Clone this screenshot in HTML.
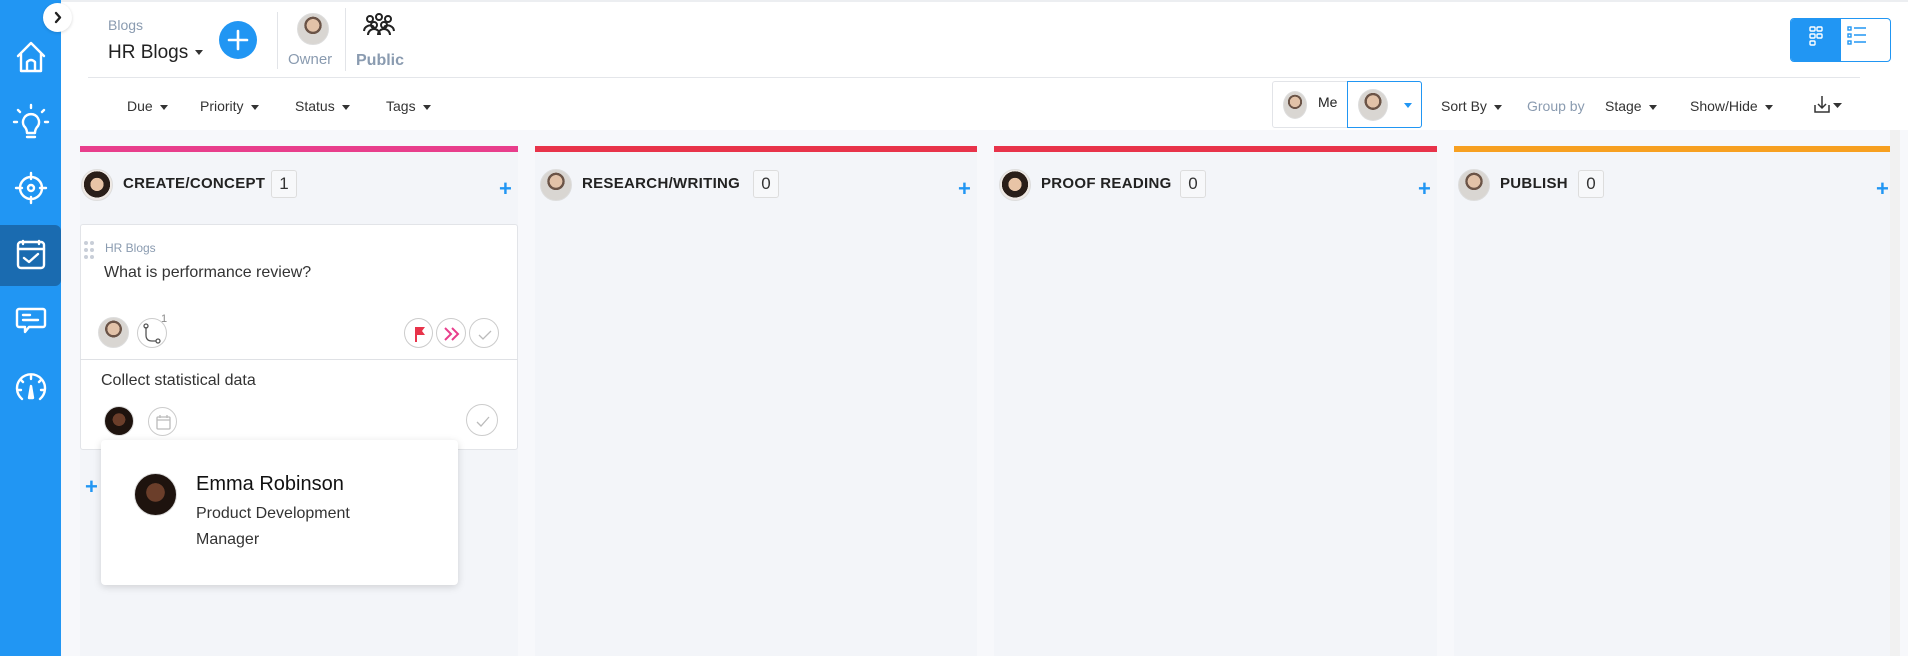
<!DOCTYPE html>
<html><head><meta charset="utf-8"><style>
*{box-sizing:border-box;margin:0;padding:0}
body{width:1908px;height:656px;overflow:hidden;background:#f7f8fb;font-family:"Liberation Sans",sans-serif;color:#222;position:relative}
.abs{position:absolute}
.side{left:0;top:0;width:61px;height:656px;background:#2196f3}
.hdr{left:61px;top:0;width:1847px;height:130px;background:#fff;border-top:2px solid #eceef1}
.av{position:absolute;border-radius:50%;background:radial-gradient(circle at 50% 38%,#e2c2a8 0 26%,#6b5447 27% 36%,#d9d6d2 37% 100%);border:1px solid #ddd}
.avf{background:radial-gradient(circle at 50% 45%,#6b3e2a 0 30%,#1e130e 31% 100%)}
.ava{background:radial-gradient(circle at 50% 48%,#e8c4a6 0 30%,#2a1e18 31% 60%,#efe9e4 61%)}
.dd{font-size:14px;color:#333}
.dd:after{content:"";display:inline-block;margin-left:7px;vertical-align:middle;border-left:4.5px solid transparent;border-right:4.5px solid transparent;border-top:5px solid #333}
.col{top:146px;height:510px;background:#f3f5f9}
.bar{left:0;top:0;right:0;height:6px}
.ct{font-size:15px;font-weight:bold;letter-spacing:.3px;color:#222}
.cnt{width:26px;height:28px;border:1px solid #ddd;border-radius:3px;background:#f7f8fa;text-align:center;line-height:26px;font-size:17px;color:#333}
.plus{color:#2196f3;font-size:22px;font-weight:bold}
.ic{position:absolute;border-radius:50%;border:1px solid #ccc;background:#fff}
</style></head><body>
<div class="abs side">
 <svg class="abs" style="left:0;top:0" width="61" height="420" fill="none" stroke="#fff" stroke-width="2.4" stroke-linecap="round" stroke-linejoin="round">
  <path d="M18 56 L31 43 L44 56 M21 53 V71 H41 V53 M27 71 V62 Q31 58 35 62 V71"/>
  <path d="M24 126 a8 8 0 1 1 14 0 q-3 3 -3 7 h-8 q0 -4 -3 -7z M27 137 h8 M31 108 v-3 M20 112 l-2 -2 M42 112 l2 -2 M17 122 h-3 M45 122 h3"/>
  <circle cx="31" cy="188" r="11"/><circle cx="31" cy="188" r="3"/><path d="M31 173 v6 M31 197 v6 M16 188 h6 M40 188 h6"/>
 </svg>
 <div class="abs" style="left:0;top:225;"></div>
 <div class="abs" style="left:0;top:225px;width:61px;height:61px;background:#1a6bb0;border-radius:0 6px 6px 0"></div>
 <svg class="abs" style="left:0;top:0" width="61" height="420" fill="none" stroke="#fff" stroke-width="2.4" stroke-linecap="round" stroke-linejoin="round">
  <rect x="18" y="242" width="26" height="26" rx="3"/><path d="M18 249 h26 M23 241 v3 M39 241 v3 M24 258 l5 4 l9 -8"/>
  <path d="M19 309 h24 a2 2 0 0 1 2 2 v14 a2 2 0 0 1 -2 2 h-14 l-4 5 v-5 h-6 a2 2 0 0 1 -2 -2 v-14 a2 2 0 0 1 2 -2z M23 315 h7 M23 320 h15"/>
  <path d="M22 399 a14 14 0 1 1 18 0"/><path d="M31 376 v3 M21 380 l2 2 M41 380 l-2 2 M18 390 h3 M44 390 h-3"/><path d="M29 398 l2 -12 l2 12 z" fill="#fff"/>
 </svg>
</div>
<div class="abs" style="left:43px;top:3px;width:29px;height:29px;border-radius:50%;background:#fff;box-shadow:0 1px 3px rgba(0,0,0,.15);z-index:3">
 <svg width="29" height="29" fill="none" stroke="#222" stroke-width="2.4" stroke-linecap="round" stroke-linejoin="round"><path d="M13 10 l4 4.5 l-4 4.5"/></svg></div>
<div class="abs hdr"></div>
<div class="abs" style="left:108px;top:17px;font-size:14px;color:#8a9bb0">Blogs</div>
<div class="abs dd" style="left:108px;top:42px;font-size:19px;color:#222">HR Blogs</div>
<div class="abs" style="left:219px;top:21px;width:38px;height:38px;border-radius:50%;background:#2196f3">
 <svg width="38" height="38" stroke="#fff" stroke-width="2.6" stroke-linecap="round"><path d="M19 10 v18 M10 19 h18"/></svg></div>
<div class="abs" style="left:277px;top:12px;width:1px;height:57px;background:#e2e4e8"></div>
<div class="av" style="left:297px;top:13px;width:32px;height:32px"></div>
<div class="abs" style="left:288px;top:51px;font-size:15px;color:#8a9bb0">Owner</div>
<div class="abs" style="left:345px;top:8px;width:1px;height:63px;background:#e2e4e8"></div>
<svg class="abs" style="left:361px;top:13px" width="36" height="24" fill="none" stroke="#222" stroke-width="2"><circle cx="9" cy="6" r="3"/><circle cx="18" cy="4" r="3"/><circle cx="27" cy="6" r="3"/><circle cx="13" cy="12" r="3"/><circle cx="23" cy="12" r="3"/><path d="M3 18 a6 6 0 0 1 10 -4 M33 18 a6 6 0 0 0 -10 -4 M7 22 a6 6 0 0 1 12 0 M17 22 a6 6 0 0 1 12 0"/></svg>
<div class="abs" style="left:356px;top:52px;font-size:16px;font-weight:bold;color:#8a9bb0">Public</div>
<div class="abs" style="left:88px;top:77px;width:1772px;height:1px;background:#e4e6ea"></div>
<div class="abs dd" style="left:127px;top:98px">Due</div>
<div class="abs dd" style="left:200px;top:98px">Priority</div>
<div class="abs dd" style="left:295px;top:98px">Status</div>
<div class="abs dd" style="left:386px;top:98px">Tags</div>
<div class="abs" style="left:1272px;top:81px;width:150px;height:47px;border:1px solid #e2e4e8;border-radius:3px;background:#fff"></div>
<div class="av" style="left:1283px;top:91px;width:24px;height:28px"></div>
<div class="abs" style="left:1318px;top:94px;font-size:14px">Me</div>
<div class="abs" style="left:1347px;top:81px;width:75px;height:47px;border:1px solid #2196f3;border-radius:0 3px 3px 0"></div>
<div class="av" style="left:1358px;top:89px;width:30px;height:32px"></div>
<div class="abs" style="left:1404px;top:103px;border-left:4.5px solid transparent;border-right:4.5px solid transparent;border-top:5px solid #2196f3"></div>
<div class="abs dd" style="left:1441px;top:98px">Sort By</div>
<div class="abs" style="left:1527px;top:98px;font-size:14px;color:#8a9bb0">Group by</div>
<div class="abs dd" style="left:1605px;top:98px">Stage</div>
<div class="abs dd" style="left:1690px;top:98px">Show/Hide</div>
<svg class="abs" style="left:1812px;top:93px" width="34" height="24" fill="none" stroke="#333" stroke-width="1.5"><path d="M3 12 v7 h14 v-7 M10 3 v12 M6 11 l4 4 l4 -4"/><path d="M21 10 h9 l-4.5 5z" fill="#333" stroke="none"/></svg>
<div class="abs" style="left:1790px;top:18px;width:101px;height:44px;border:1px solid #2196f3;border-radius:4px;overflow:hidden;background:#fff">
 <div style="width:50px;height:44px;background:#2196f3"></div></div>
<svg class="abs" style="left:1805px;top:25px" width="80" height="30" fill="none" stroke-width="1.4"><g stroke="#fff"><rect x="5" y="2" width="5" height="4" rx="1"/><rect x="12" y="2" width="5" height="4" rx="1"/><rect x="5" y="9" width="5" height="4" rx="1"/><rect x="12" y="9" width="5" height="4" rx="1"/><rect x="5" y="16" width="5" height="4" rx="1"/></g><g stroke="#2196f3"><rect x="43" y="2" width="3" height="3"/><rect x="43" y="9" width="3" height="3"/><rect x="43" y="16" width="3" height="3"/><path d="M49 3 h12 M49 10 h12 M49 17 h12"/></g></svg>

<div class="abs col" style="left:80px;width:438px"><div class="abs bar" style="background:#e83e8c"></div></div>
<div class="abs col" style="left:535px;width:442px"><div class="abs bar" style="background:#e8334a"></div></div>
<div class="abs col" style="left:994px;width:443px"><div class="abs bar" style="background:#e8334a"></div></div>
<div class="abs col" style="left:1454px;width:436px"><div class="abs bar" style="background:#f7a021"></div></div>
<div class="abs" style="left:1890px;top:130px;width:10px;height:526px;background:#f1f1f1"></div>

<div class="av ava" style="left:81px;top:169px;width:32px;height:32px"></div>
<div class="abs ct" style="left:123px;top:175px">CREATE/CONCEPT</div>
<div class="abs cnt" style="left:271px;top:170px">1</div>
<div class="abs plus" style="left:499px;top:176px">+</div>
<div class="av" style="left:540px;top:169px;width:32px;height:32px"></div>
<div class="abs ct" style="left:582px;top:175px">RESEARCH/WRITING</div>
<div class="abs cnt" style="left:753px;top:170px">0</div>
<div class="abs plus" style="left:958px;top:176px">+</div>
<div class="av ava" style="left:999px;top:169px;width:32px;height:32px"></div>
<div class="abs ct" style="left:1041px;top:175px">PROOF READING</div>
<div class="abs cnt" style="left:1180px;top:170px">0</div>
<div class="abs plus" style="left:1418px;top:176px">+</div>
<div class="av" style="left:1458px;top:169px;width:32px;height:32px"></div>
<div class="abs ct" style="left:1500px;top:175px">PUBLISH</div>
<div class="abs cnt" style="left:1578px;top:170px">0</div>
<div class="abs plus" style="left:1876px;top:176px">+</div>

<div class="abs" style="left:80px;top:224px;width:438px;height:226px;background:#fff;border:1px solid #e2e4e8;border-radius:3px"></div>
<div class="abs" style="left:80px;top:359px;width:438px;height:1px;background:#dfe1e5"></div>
<svg class="abs" style="left:83px;top:240px" width="14" height="20" fill="#c8ced8"><circle cx="3" cy="3" r="2"/><circle cx="9" cy="3" r="2"/><circle cx="3" cy="10" r="2"/><circle cx="9" cy="10" r="2"/><circle cx="3" cy="17" r="2"/><circle cx="9" cy="17" r="2"/></svg>
<div class="abs" style="left:105px;top:241px;font-size:12px;color:#8a9bb0">HR Blogs</div>
<div class="abs" style="left:104px;top:264px;font-size:16px;color:#333">What is performance review?</div>
<div class="av" style="left:98px;top:317px;width:31px;height:31px"></div>
<div class="ic" style="left:137px;top:318px;width:30px;height:30px"><svg width="30" height="30" fill="none" stroke="#555" stroke-width="1.3"><path d="M8 8 v8 q0 6 6 6 h4"/><circle cx="8" cy="7" r="2"/><circle cx="20" cy="22" r="2"/></svg></div>
<div class="abs" style="left:161px;top:313px;font-size:11px;color:#888">1</div>
<div class="ic" style="left:404px;top:318px;width:29px;height:30px"><svg width="29" height="30"><path d="M10 8 h10 l-3 4 l3 4 h-8 v7 h-2z" fill="#e8334a"/></svg></div>
<div class="ic" style="left:436px;top:318px;width:30px;height:30px"><svg width="30" height="30" fill="none" stroke="#e83e8c" stroke-width="2"><path d="M8 9 l6 6 l-6 6 M15 9 l6 6 l-6 6"/></svg></div>
<div class="ic" style="left:469px;top:318px;width:30px;height:30px"><svg width="30" height="30" fill="none" stroke="#bbb" stroke-width="1.3"><path d="M9 16 l4 4 l8 -8"/></svg></div>
<div class="abs" style="left:101px;top:372px;font-size:16px;color:#333">Collect statistical data</div>
<div class="av avf" style="left:104px;top:406px;width:30px;height:30px"></div>
<div class="ic" style="left:148px;top:407px;width:29px;height:29px"><svg width="29" height="29" fill="none" stroke="#bbb" stroke-width="1.3"><rect x="8" y="9" width="13" height="12" rx="1"/><path d="M8 12 h13 M11 7 v3 M18 7 v3"/></svg></div>
<div class="ic" style="left:466px;top:404px;width:32px;height:32px"><svg width="32" height="32" fill="none" stroke="#bbb" stroke-width="1.3"><path d="M10 17 l4 4 l8 -9"/></svg></div>
<div class="abs plus" style="left:85px;top:474px">+</div>
<div class="abs" style="left:101px;top:440px;width:357px;height:145px;background:#fff;border-radius:4px;box-shadow:0 2px 8px rgba(0,0,0,.15)"></div>
<div class="av avf" style="left:134px;top:473px;width:43px;height:43px"></div>
<div class="abs" style="left:196px;top:473px;font-size:20px;color:#111">Emma Robinson</div>
<div class="abs" style="left:196px;top:501px;font-size:16px;color:#333;line-height:26px">Product Development<br>Manager</div>
</body></html>
